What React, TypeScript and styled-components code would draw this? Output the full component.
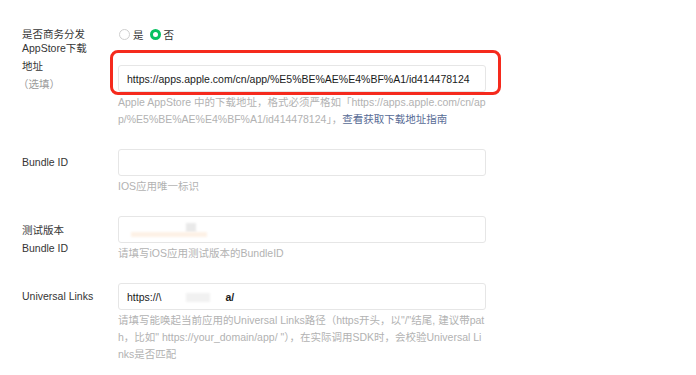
import React from 'react';
import styled, { createGlobalStyle } from 'styled-components';

const GlobalStyle = createGlobalStyle`
  body {
    margin: 0;
    background: #ffffff;
    font-family: "Liberation Sans", "Noto Sans CJK SC", sans-serif;
  }
`;

const Form = styled.div`
  display: flex;
  flex-direction: column;
  gap: 21px;
  padding: 24px 0 0 22px;
`;

const Row = styled.div`
  display: grid;
  grid-template-columns: 96px 368px;
  align-items: start;
`;

const Label = styled.div<{ $offset?: number }>`
  margin-top: ${(p) => p.$offset ?? 0}px;
  font-size: 10.5px;
  line-height: 18px;
  color: #353535;
`;

const Optional = styled.div`
  color: #9a9a9a;
  margin-left: -4px;
`;

const Control = styled.div<{ $offset?: number }>`
  padding-top: ${(p) => p.$offset ?? 0}px;
  display: flex;
  flex-direction: column;
`;

const RadioGroup = styled.div`
  display: flex;
  align-items: center;
  height: 18px;
  margin-left: 1px;
  font-size: 10.5px;
  color: #353535;
`;

const RadioItem = styled.label`
  display: flex;
  align-items: center;
  gap: 3px;
  margin-right: 6px;
`;

const RadioDot = styled.span<{ $checked?: boolean }>`
  width: 11px;
  height: 11px;
  box-sizing: border-box;
  border-radius: 50%;
  border: ${(p) => (p.$checked ? '3.5px solid #07c160' : '1px solid #cfcfcf')};
  background: #fff;
`;

const Highlight = styled.div`
  position: relative;
`;

const HighlightFrame = styled.div`
  position: absolute;
  left: -8px;
  top: -15px;
  right: -15px;
  bottom: -3px;
  border: 3px solid #f52a1d;
  border-radius: 8px;
  pointer-events: none;
`;

const Input = styled.div`
  height: 27px;
  box-sizing: border-box;
  border: 1px solid #e6e6e6;
  border-radius: 3px;
  padding: 0 8px;
  display: flex;
  align-items: center;
  font-size: 10.5px;
  color: #1a1a1a;
  position: relative;
  overflow: hidden;
`;

const Help = styled.div`
  margin-top: 2px;
  font-size: 10.5px;
  line-height: 17px;
  color: #b2b2b2;
  word-break: break-all;
`;

const Link = styled.a`
  color: #576b95;
  text-decoration: none;
`;

const Smudge = styled.span<{ $x: number; $y: number; $w: number; $h: number; $color: string }>`
  position: absolute;
  left: ${(p) => p.$x}px;
  top: ${(p) => p.$y}px;
  width: ${(p) => p.$w}px;
  height: ${(p) => p.$h}px;
  background: ${(p) => p.$color};
  filter: blur(1px);
`;

const Tail = styled.span`
  margin-left: 64px;
  font-weight: bold;
`;

export default function App() {
  return (
    <>
      <GlobalStyle />
      <Form>
        <Row>
          <Label $offset={1}>是否商务分发</Label>
          <Control $offset={1}>
            <RadioGroup>
              <RadioItem>
                <RadioDot />是
              </RadioItem>
              <RadioItem>
                <RadioDot $checked />否
              </RadioItem>
            </RadioGroup>
          </Control>
        </Row>

        <Row>
          <Label $offset={-25}>
            AppStore下载
            <br />
            地址
            <Optional>（选填）</Optional>
          </Label>
          <Control $offset={1}>
            <Highlight>
              <Input>https://apps.apple.com/cn/app/%E5%BE%AE%E4%BF%A1/id414478124</Input>
              <HighlightFrame />
            </Highlight>
            <Help>
              Apple AppStore 中的下载地址，格式必须严格如「https://apps.apple.com/cn/app/%E5%BE%AE%E4%BF%A1/id414478124」，
              <Link href="#">查看获取下载地址指南</Link>
            </Help>
          </Control>
        </Row>

        <Row>
          <Label $offset={4}>Bundle ID</Label>
          <Control>
            <Input />
            <Help>IOS应用唯一标识</Help>
          </Control>
        </Row>

        <Row>
          <Label $offset={5}>
            测试版本
            <br />
            Bundle ID
          </Label>
          <Control>
            <Input>
              <Smudge $x={67} $y={6} $w={10} $h={9} $color="#e9e9e9" />
              <Smudge $x={12} $y={15} $w={76} $h={5} $color="#fdf1e6" />
            </Input>
            <Help>请填写iOS应用测试版本的BundleID</Help>
          </Control>
        </Row>

        <Row>
          <Label $offset={4}>Universal Links</Label>
          <Control>
            <Input>
              https://\<Tail>a/</Tail>
              <Smudge $x={67} $y={9} $w={24} $h={9} $color="#f1f1f1" />
            </Input>
            <Help>
              请填写能唤起当前应用的Universal Links路径（https开头，以"/"结尾, 建议带path，比如" https://your_domain/app/ "），在实际调用SDK时，会校验Universal Links是否匹配
            </Help>
          </Control>
        </Row>
      </Form>
    </>
  );
}
